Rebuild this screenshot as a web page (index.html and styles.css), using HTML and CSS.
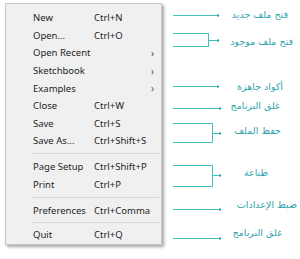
FILE: index.html
```html
<!DOCTYPE html>
<html>
<head>
<meta charset="utf-8">
<link rel="stylesheet" href="styles.css">
</head>
<body>
<div class="page">
  <div class="menu">
    <div class="item"><span class="label">New</span><span class="key">Ctrl+N</span></div>
    <div class="item"><span class="label">Open...</span><span class="key">Ctrl+O</span></div>
    <div class="item"><span class="label">Open Recent</span><span class="key"></span><span class="arrow">&#8250;</span></div>
    <div class="item"><span class="label">Sketchbook</span><span class="key"></span><span class="arrow">&#8250;</span></div>
    <div class="item"><span class="label">Examples</span><span class="key"></span><span class="arrow">&#8250;</span></div>
    <div class="item"><span class="label">Close</span><span class="key">Ctrl+W</span></div>
    <div class="item"><span class="label">Save</span><span class="key">Ctrl+S</span></div>
    <div class="item"><span class="label">Save As...</span><span class="key">Ctrl+Shift+S</span></div>
    <div class="sep"></div>
    <div class="item"><span class="label">Page Setup</span><span class="key">Ctrl+Shift+P</span></div>
    <div class="item"><span class="label">Print</span><span class="key">Ctrl+P</span></div>
    <div class="sep"></div>
    <div class="item"><span class="label">Preferences</span><span class="key">Ctrl+Comma</span></div>
    <div class="sep sep-short"></div>
    <div class="item"><span class="label">Quit</span><span class="key">Ctrl+Q</span></div>
  </div>

  <svg class="lines" width="300" height="259" viewBox="0 0 300 259">
    <g fill="none" stroke="#45c0c0" stroke-width="1" shape-rendering="crispEdges">
      <path d="M173 15.5 H217"/>
      <path d="M173 33.5 H208.5 V46.5 H173 M208.5 40.5 H217"/>
      <path d="M173 86.5 H217"/>
      <path d="M173 108.5 H219"/>
      <path d="M173 123.5 H212.5 V142.5 H173 M212.5 133.5 H219"/>
      <path d="M173 165.5 H212.5 V186.5 H173 M212.5 175.5 H219"/>
      <path d="M173 209.5 H219"/>
      <path d="M173 238.5 H219"/>
    </g>
    <g fill="#1f9ea6">
      <rect x="217" y="14.5" width="2" height="2"/>
      <rect x="217" y="39.5" width="2" height="2"/>
      <rect x="217" y="85.5" width="2" height="2"/>
      <rect x="219" y="107.5" width="2" height="2"/>
      <rect x="219" y="132.5" width="2" height="2"/>
      <rect x="219" y="174.5" width="2" height="2"/>
      <rect x="219" y="208.5" width="2" height="2"/>
      <rect x="219" y="237.5" width="2" height="2"/>
    </g>
  </svg>

  <span class="note n1" dir="rtl">فتح ملف جديد</span>
  <span class="note n2" dir="rtl">فتح ملف موجود</span>
  <span class="note n3" dir="rtl">أكواد جاهزة</span>
  <span class="note n4" dir="rtl">غلق البرنامج</span>
  <span class="note n5" dir="rtl">حفظ الملف</span>
  <span class="note n6" dir="rtl">طباعة</span>
  <span class="note n7" dir="rtl">ضبط الإعدادات</span>
  <span class="note n8" dir="rtl">غلق البرنامج</span>
</div>
</body>
</html>
```

FILE: styles.css
```css
html, body {
  margin: 0;
  padding: 0;
  background: #ffffff;
}

.page {
  position: relative;
  width: 300px;
  height: 259px;
  overflow: hidden;
  padding: 3px 0 0 5px;
  box-sizing: border-box;
}

.menu {
  width: 157px;
  height: 242px;
  box-sizing: border-box;
  background: #f0f0f0;
  border: 1px solid #c8c8c8;
  box-shadow: 2px 2px 3px rgba(0, 0, 0, 0.35);
  padding: 5px 0 0 0;
  font-family: "Noto Sans", "Open Sans", sans-serif;
  font-size: 9.5px;
  color: #1e1e1e;
}

.item {
  display: flex;
  align-items: center;
  height: 17.6px;
  padding-left: 27px;
}

.label {
  width: 61px;
  white-space: nowrap;
}

.key {
  flex: 1;
  white-space: nowrap;
}

.arrow {
  width: 10px;
  color: #555;
  font-size: 10px;
}

.sep {
  height: 8.4px;
  display: flex;
  align-items: center;
  padding: 0 2px 0 25px;
}

.sep::before {
  content: "";
  flex: 1;
  height: 1px;
  background: #d7d7d7;
}

.sep-short {
  height: 6.4px;
}

.lines {
  position: absolute;
  left: 0;
  top: 0;
}

.note {
  position: absolute;
  font-family: "DejaVu Sans", sans-serif;
  font-size: 9.5px;
  line-height: 12px;
  color: #2fa3ac;
  white-space: nowrap;
}

.n1 { right: 12px; top: 9px; }
.n2 { right: 7px; top: 36px; }
.n3 { right: 17px; top: 81px; }
.n4 { right: 20px; top: 100px; }
.n5 { right: 19px; top: 125px; }
.n6 { right: 32px; top: 167px; }
.n7 { right: 3px; top: 199px; }
.n8 { right: 18px; top: 227px; }
```
